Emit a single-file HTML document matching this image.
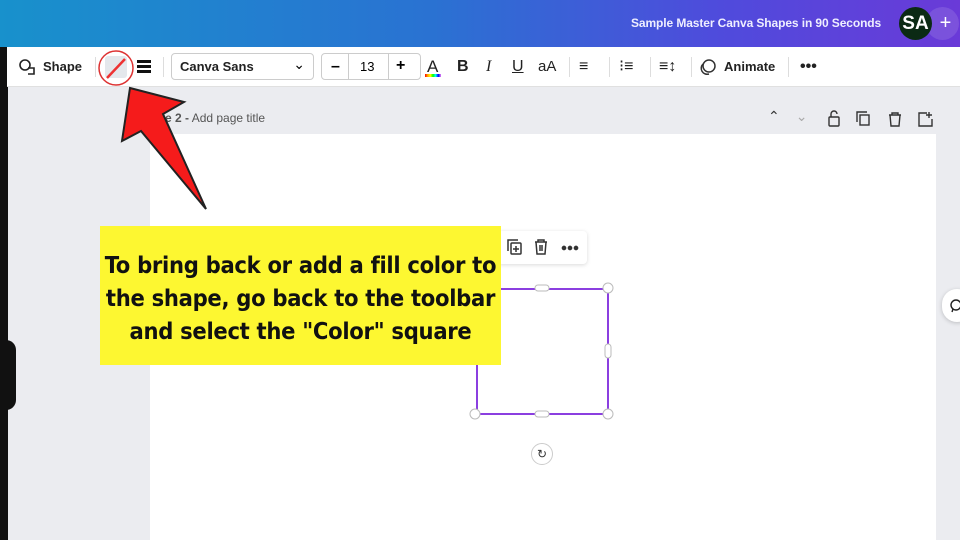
<!DOCTYPE html>
<html><head><meta charset="utf-8"><style>
*{margin:0;padding:0;box-sizing:border-box}
body{width:960px;height:540px;overflow:hidden;position:relative;background:#ebecf0;font-family:"Liberation Sans",sans-serif}
.top{position:absolute;left:0;top:0;width:960px;height:47px;background:linear-gradient(90deg,#1891cc 0%,#2a72d2 45%,#4f4bdc 75%,#6a3ad8 100%)}
.title{position:absolute;left:631px;top:16px;color:#eef;font-size:12px;font-weight:bold;letter-spacing:-0.1px}
.av{position:absolute;left:899px;top:7px;width:33px;height:33px;border-radius:50%;background:#0b2a14;color:#fff;font-size:19px;font-weight:bold;text-align:center;line-height:33px}
.plus{position:absolute;left:926px;top:7px;width:33px;height:33px;border-radius:50%;background:rgba(255,255,255,.12);color:#fff;font-size:20px;text-align:center;line-height:32px;padding-left:6px}
.tb{position:absolute;left:7px;top:47px;width:953px;height:40px;background:#fff;border-bottom:1px solid #e0e0e0}
.t{position:absolute;top:0;height:40px;line-height:40px;font-size:13px;color:#222}
.sep{position:absolute;top:10px;width:1px;height:20px;background:#ddd}
.box{position:absolute;top:6px;height:27px;border:1px solid #ccc;border-radius:4px}
.left{position:absolute;left:0;top:47px;width:8px;height:493px;background:#111}
.bump{position:absolute;left:0;top:340px;width:16px;height:70px;background:#111;border-radius:0 10px 10px 0}
.page{position:absolute;left:150px;top:134px;width:786px;height:406px;background:#fff}
.yel{position:absolute;left:100px;top:226px;width:401px;height:139px;background:#fdf731;color:#111;font-size:23.5px;font-weight:bold;text-align:center;line-height:33px;padding-top:23px;font-family:"DejaVu Sans Condensed","Liberation Sans",sans-serif;letter-spacing:-0.3px}
</style></head><body>
<div class="top"><div class="title">Sample Master Canva Shapes in 90 Seconds</div><div class="plus">+</div><div class="av">SA</div></div>
<div class="left"></div><div class="bump"></div>
<div class="tb">
<svg style="position:absolute;left:11px;top:11px" width="18" height="18" viewBox="0 0 18 18" fill="none" stroke="#222" stroke-width="1.6"><circle cx="7" cy="7" r="5"/><path d="M10 10h6v6h-6"/></svg>
<div class="t" style="left:36px;font-weight:bold">Shape</div>
<div class="sep" style="left:88px"></div>
<div style="position:absolute;left:98px;top:9px;width:22px;height:22px;background:#e4e8ec;border-radius:3px"></div>
<svg style="position:absolute;left:90px;top:2px" width="38" height="38"><circle cx="19" cy="19" r="17" fill="none" stroke="#d33" stroke-width="1.5"/><line x1="10" y1="29" x2="28" y2="10" stroke="#e33" stroke-width="2.5"/></svg>
<div style="position:absolute;left:130px;top:13px;width:14px;height:3px;background:#111;box-shadow:0 5px 0 #111,0 10px 0 #111"></div>
<div class="sep" style="left:156px"></div>
<div class="box" style="left:164px;width:143px"><span style="position:absolute;left:8px;top:5px;font-size:13px;font-weight:bold;color:#222">Canva Sans</span><span style="position:absolute;right:8px;top:2px;font-size:14px">⌄</span></div>
<div class="box" style="left:314px;width:100px"><span style="position:absolute;left:9px;top:4px;font-weight:bold">–</span><span style="position:absolute;left:26px;top:0;width:1px;height:25px;background:#ccc"></span><span style="position:absolute;left:38px;top:5px;font-size:13px">13</span><span style="position:absolute;left:66px;top:0;width:1px;height:25px;background:#ccc"></span><span style="position:absolute;left:74px;top:3px;font-weight:bold">+</span></div>
<div class="t" style="left:420px;font-size:17px">A</div><div style="position:absolute;left:418px;top:27px;width:16px;height:3px;background:linear-gradient(90deg,red,orange,yellow,lime,cyan,blue,violet)"></div>
<div class="t" style="left:450px;font-size:16px;font-weight:bold">B</div>
<div class="t" style="left:479px;font-size:16px;font-style:italic;font-family:'Liberation Serif'">I</div>
<div class="t" style="left:505px;font-size:16px;text-decoration:underline">U</div>
<div class="t" style="left:531px;font-size:15px">aA</div>
<div class="sep" style="left:562px"></div>
<div class="t" style="left:572px;font-size:16px">≡</div>
<div class="sep" style="left:602px"></div>
<div class="t" style="left:612px;font-size:16px">⁝≡</div>
<div class="sep" style="left:643px"></div>
<div class="t" style="left:652px;font-size:16px">≡↕</div>
<div class="sep" style="left:684px"></div>
<svg style="position:absolute;left:692px;top:11px" width="18" height="18" fill="none" stroke="#333" stroke-width="1.5"><circle cx="10" cy="8" r="6"/><path d="M4 6a6 6 0 0 0 6 10"/></svg>
<div class="t" style="left:717px;font-weight:bold">Animate</div>
<div class="sep" style="left:781px"></div>
<div class="t" style="left:793px;font-size:16px;font-weight:bold">•••</div>
</div>
<div style="position:absolute;left:165px;top:111px;font-size:12px;color:#555"><b>e 2 -</b> Add page title</div>
<div style="position:absolute;left:768px;top:108px;font-size:14px;color:#333;letter-spacing:16px">⌃<span style="color:#aaa">⌄</span></div>
<svg style="position:absolute;left:826px;top:110px" width="110" height="18" fill="none" stroke="#333" stroke-width="1.4"><rect x="3" y="7" width="10" height="9" rx="1"/><path d="M5 7V4a3 3 0 0 1 6 0"/><rect x="34" y="5" width="9" height="10"/><path d="M31 12V2h10"/><path d="M63 5h12M66 5V3h6v2M64 5l1 11h8l1-11"/><path d="M101 3h-8v13h13V9M103 2v6M100 5h6"/></svg>
<div class="page"></div>
<div style="position:absolute;left:498px;top:231px;width:89px;height:33px;background:#fff;border-radius:4px;box-shadow:0 1px 4px rgba(0,0,0,.15)"></div>
<svg style="position:absolute;left:505px;top:238px" width="80" height="20" fill="none" stroke="#333" stroke-width="1.5"><rect x="6" y="5" width="10" height="11" rx="1"/><path d="M3 13V2h10M11 8v6M8 11h6"/><path d="M30 4h12M33 4V2h6v2M31 4l1 12h8l1-12M35 7v6M37 7v6"/><circle cx="59" cy="10" r="1.6" fill="#333"/><circle cx="65" cy="10" r="1.6" fill="#333"/><circle cx="71" cy="10" r="1.6" fill="#333"/></svg>
<div style="position:absolute;left:476px;top:288px;width:133px;height:127px;border:2px solid #8b3fe0"></div>
<svg style="position:absolute;left:466px;top:280px" width="154" height="145"><g fill="#fff" stroke="#bbb"><circle cx="142" cy="8" r="5"/><circle cx="9" cy="134" r="5"/><circle cx="142" cy="134" r="5"/><rect x="69" y="5" width="14" height="6" rx="3"/><rect x="69" y="131" width="14" height="6" rx="3"/><rect x="139" y="64" width="6" height="14" rx="3"/></g></svg>
<div style="position:absolute;left:531px;top:443px;width:22px;height:22px;border-radius:50%;border:1px solid #ccc;background:#fff;text-align:center;line-height:20px;font-size:12px;color:#333">↻</div>
<div style="position:absolute;left:942px;top:289px;width:30px;height:33px;border-radius:16px;background:#fff;box-shadow:0 1px 4px rgba(0,0,0,.2)"></div>
<svg style="position:absolute;left:949px;top:299px" width="12" height="14" fill="none" stroke="#222" stroke-width="1.4"><circle cx="7" cy="6" r="5"/><path d="M4 10l-1 3"/></svg>
<div class="yel">To bring back or add a fill color to<br>the shape, go back to the toolbar<br>and select the "Color" square</div>
<svg style="position:absolute;left:0;top:0" width="960" height="540"><polygon points="130,88 184,102 163,114 206,209 141,131 122,141" fill="#f51b1b" stroke="#222" stroke-width="2" stroke-linejoin="miter"/></svg>
</body></html>
